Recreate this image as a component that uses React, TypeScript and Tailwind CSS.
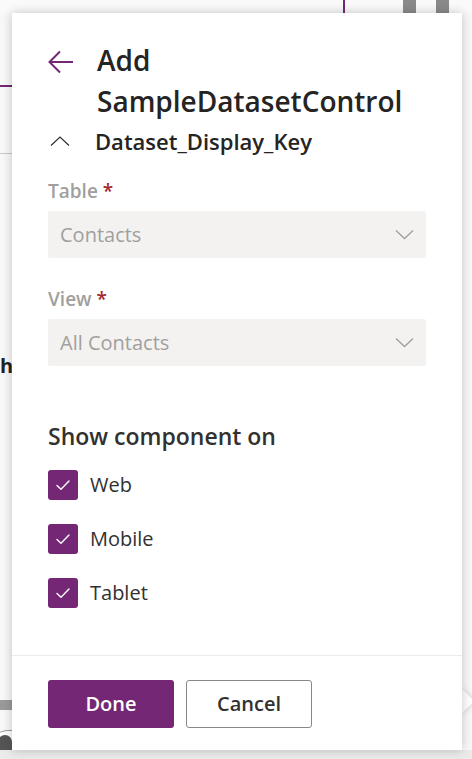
import React from "react";

const Check = () => (
  <svg width="16" height="12" viewBox="0 0 16 12" fill="none">
    <path d="M2 6.5 L6 10.2 L14 2" stroke="white" strokeWidth="1.4" strokeLinecap="round" strokeLinejoin="round" />
  </svg>
);

const ChevronDown = () => (
  <svg width="19" height="11" viewBox="0 0 19 11" fill="none">
    <path d="M1 1.5 L9.5 9.5 L18 1.5" stroke="#a19f9d" strokeWidth="1.3" />
  </svg>
);

function Field({ label, value }: { label: string; value: string }) {
  return (
    <div className="flex flex-col">
      <div className="text-[19px] leading-[24px] font-semibold text-[#a19f9d]">
        {label} <span className="text-[#a4262c]">*</span>
      </div>
      <div className="mt-[8px] h-[47px] rounded-[2px] bg-[#f3f2f1] flex items-center justify-between pl-[12px] pr-[12px]">
        <span className="text-[20px] text-[#a19f9d]">{value}</span>
        <ChevronDown />
      </div>
    </div>
  );
}

function CheckRow({ label }: { label: string }) {
  return (
    <div className="flex items-center gap-[12px] h-[30px]">
      <div className="w-[30px] h-[30px] rounded-[3px] bg-[#742774] flex items-center justify-center">
        <Check />
      </div>
      <span className="text-[20px] text-[#323130]">{label}</span>
    </div>
  );
}

export default function App() {
  return (
    <div
      className="relative w-[472px] h-[759px] overflow-hidden bg-[#f8f8f8]"
      style={{ fontFamily: "'Open Sans', 'Noto Sans', sans-serif" }}
    >
      {/* background content */}
      <div className="absolute left-0 top-0 w-[472px] h-[13px] bg-[#fafafa]" />
      <div className="absolute left-[343px] top-0 w-[2px] h-[13px] bg-[#742774]" />
      <div className="absolute left-[403px] top-0 w-[13px] h-[13px] bg-[#8a8a8a]" />
      <div className="absolute left-[436px] top-0 w-[13px] h-[13px] bg-[#8a8a8a]" />
      <div className="absolute left-0 top-[85px] w-[12px] h-[2px] bg-[#742774]" />
      <div className="absolute left-0 top-[153px] w-[12px] h-[1px] bg-[#c8c8c8]" />
      <div className="absolute left-0 top-[352px] text-[20px] leading-[28px] font-bold text-[#222]">h</div>
      <div className="absolute left-0 top-[700px] w-[12px] h-[10px] bg-[#9a9a9a]" />
      <div className="absolute left-[-8px] top-[730px] w-[58px] h-[30px] rounded-full border border-[#999] bg-white" />
      <div className="absolute left-[-2px] top-[735px] w-[14px] h-[22px] rounded-full bg-[#555]" />
      <div className="absolute left-[172px] top-[740px] w-[20px] h-[20px] rounded-full bg-[#555]" />
      <div className="absolute left-0 top-[750px] w-[472px] h-[9px] bg-[#ebebeb]" />

      {/* callout beak */}
      <div className="absolute left-[455px] top-[693px] w-[16px] h-[16px] rotate-45 bg-white shadow-[0_0_6px_rgba(0,0,0,0.18)]" />

      {/* panel */}
      <div className="absolute left-[12px] top-[13px] w-[450px] h-[737px] bg-white shadow-[0_0_10px_rgba(0,0,0,0.22)] flex flex-col">
        <div className="flex-1 flex flex-col pl-[36px] pr-[36px]">
          <div className="flex items-start mt-[27px]">
            <svg width="26" height="24" viewBox="0 0 26 24" fill="none" className="mt-[10px] shrink-0">
              <path d="M12 1.5 L1.5 12 L12 22.5 M1.5 12 H25" stroke="#742774" strokeWidth="2" />
            </svg>
            <div className="ml-[23px] text-[28px] leading-[41px] font-semibold text-[#252423]">
              Add
              <br />
              SampleDatasetControl
            </div>
          </div>
          <div className="flex items-center mt-[4px] h-[30px]">
            <svg width="20" height="12" viewBox="0 0 20 12" fill="none" className="ml-[2px] shrink-0">
              <path d="M1 10.5 L10 2 L19 10.5" stroke="#323130" strokeWidth="1.2" />
            </svg>
            <span className="ml-[25px] text-[22px] font-semibold text-[#252423]">Dataset_Display_Key</span>
          </div>
          <div className="mt-[23px] flex flex-col gap-[29px]">
            <Field label="Table" value="Contacts" />
            <Field label="View" value="All Contacts" />
          </div>
          <div className="mt-[55px] text-[23px] leading-[30px] font-semibold text-[#323130]">Show component on</div>
          <div className="mt-[19px] flex flex-col gap-[24px]">
            <CheckRow label="Web" />
            <CheckRow label="Mobile" />
            <CheckRow label="Tablet" />
          </div>
        </div>
        <div className="border-t border-[#edebe9] h-[95px] flex items-start pl-[36px] pt-[24px] gap-[12px]">
          <button className="w-[126px] h-[48px] rounded-[3px] bg-[#742774] text-white text-[20px] font-semibold">Done</button>
          <button className="w-[126px] h-[48px] rounded-[3px] bg-white border border-[#8a8886] text-[#323130] text-[20px] font-semibold">Cancel</button>
        </div>
      </div>
    </div>
  );
}
